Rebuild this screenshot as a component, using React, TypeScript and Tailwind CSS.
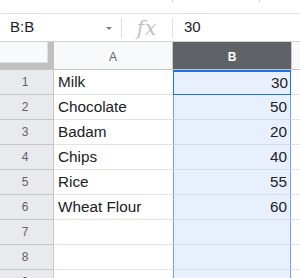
const rows: [string, string][] = [
  ['Milk', '30'],
  ['Chocolate', '50'],
  ['Badam', '20'],
  ['Chips', '40'],
  ['Rice', '55'],
  ['Wheat Flour', '60'],
  ['', ''],
  ['', ''],
  ['', ''],
];

export default function App() {
  return (
    <div className="w-[300px] h-[278px] overflow-hidden bg-white font-['Liberation_Sans',Arial,sans-serif] text-[#202124]">
      {/* top strip */}
      <div className="h-[14px] border-b border-[#e0e0e0] flex">
        <div className="ml-[172px] w-px h-[3px] bg-[#dadce0]" />
        <div className="ml-[86px] w-px h-[3px] bg-[#dadce0]" />
      </div>

      {/* formula bar */}
      <div className="h-[28px] border-b border-[#d3d3d3] flex items-center">
        <div className="w-[121px] flex items-center pl-[10px] pr-[8px]">
          <span className="text-[15px] flex-1">B:B</span>
          <svg width="8" height="5" viewBox="0 0 8 5" className="mt-[1px]">
            <path d="M1 1h6L4 4z" fill="#7a7d80" />
          </svg>
        </div>
        <div className="w-px h-[20px] bg-[#e0e0e0]" />
        <div className="w-[50px] flex justify-center">
          <span className="font-['DejaVu_Serif',serif] italic text-[20px] text-[#bdc1c6] leading-none tracking-[1px]">fx</span>
        </div>
        <div className="w-px h-[20px] bg-[#e0e0e0]" />
        <span className="pl-[11px] text-[15px]">30</span>
      </div>

      {/* column headers */}
      <div className="h-[28px] border-b border-[#c4c7c5] flex">
        <div className="w-[54px] flex flex-col bg-[#c0c0c0]">
          <div className="h-[21px] w-[48px] bg-[#f8f9fa] border-r border-b border-[#e0e0e0]" />
        </div>
        <div className="w-[119px] bg-[#f8f9fa] border-r border-[#c4c7c5] flex items-center justify-center text-[12px] text-[#5f6368] pt-[2px]">
          A
        </div>
        <div className="w-[118px] bg-[#5f6368] flex items-center justify-center text-[12px] text-white font-bold pt-[2px]">
          B
        </div>
        <div className="flex-1 bg-[#f8f9fa] border-l border-[#c4c7c5]" />
      </div>

      {/* data rows */}
      {rows.map(([name, value], i) => (
        <div key={i} className="h-[25px] flex">
          <div className="w-[54px] bg-[#e8eaed] border-r border-b border-[#c4c7c5] flex items-center justify-center text-[12px] text-[#5f6368] pr-[3px]">
            {i + 1}
          </div>
          <div className="w-[119px] border-b border-[#e2e3e3] flex items-center pl-[4px] text-[15.3px] text-[#202124] whitespace-nowrap">
            {name}
          </div>
          <div
            className={`w-[118px] bg-[#e8f0fe] border-b border-x border-x-[#6fa2f5] border-b-[#d2dcea] flex items-center justify-end text-[15.3px] text-[#202124] ${
              i === 0 ? 'border-2 !border-[#1a73e8] pr-[2px]' : 'pr-[3px]'
            }`}
          >
            {value}
          </div>
          <div className="flex-1 border-b border-[#e2e3e3]" />
        </div>
      ))}
    </div>
  );
}
